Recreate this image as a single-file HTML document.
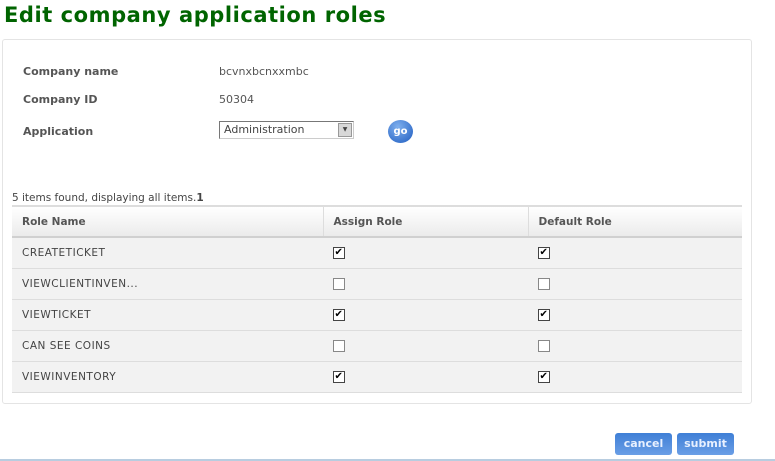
<html><head><style>
body{margin:0;width:775px;height:461px;background:#fff;font-family:"DejaVu Sans",Verdana,sans-serif;position:relative;overflow:hidden}
h1{position:absolute;left:4px;top:3px;margin:0;font:bold 21px "DejaVu Sans",Verdana,sans-serif;color:#006400;letter-spacing:0.55px}
.box{position:absolute;left:2px;top:39px;width:748px;height:363px;border:1px solid #e4e4e4;border-radius:3px}
.l{position:absolute;left:23px;font-size:11px;font-weight:bold;color:#555}
.v{position:absolute;left:219px;font-size:11px;color:#555}
.sel{position:absolute;left:219px;top:121px;width:135px;height:18px;border:1px solid #777;border-right-color:#ccc;border-bottom-color:#ccc;box-sizing:border-box;font-size:11px;color:#444;padding-left:4px;line-height:16px;background:#fff}
.sel span{position:absolute;right:1px;top:1px;width:14px;height:14px;background:#d8d8d8;border:1px solid #999;box-sizing:border-box;font-size:6px;text-align:center;line-height:12px}
.go{position:absolute;left:388px;top:120px;width:25px;height:23px;border-radius:50%;background:radial-gradient(circle at 40% 30%,#7fb0ee,#1e5cc0);color:#fff;font-size:10px;font-weight:bold;text-align:center;line-height:23px}
.cnt{position:absolute;left:12px;top:192px;font-size:10.5px;color:#444}
table{position:absolute;left:12px;top:205px;width:730px;border-collapse:collapse;font-size:10.5px;color:#444}
th{height:31px;text-align:left;padding-left:10px;font-weight:bold;background:linear-gradient(#fff,#ebebeb);border-top:2px solid #ddd;border-bottom:2px solid #d0d0d0;border-left:1px solid #ddd;color:#555;box-sizing:border-box}
th:first-child{border-left:none}
td{height:31px;padding-left:10px;background:#f2f2f2;border-bottom:1px solid #ddd;box-sizing:border-box;letter-spacing:0.5px}
.cb{display:inline-block;width:12px;height:12px;border:1px solid #444;background:#fff;box-sizing:border-box;font-size:10px;line-height:10px;text-align:center;color:#000;font-weight:900;vertical-align:middle}
.cb.n{border-color:#888}
.btn{position:absolute;top:433px;height:22px;width:57px;border-radius:3px;background:linear-gradient(#3f7fd6,#6a9ee6);color:#e8f0ff;font-size:11px;font-weight:bold;text-align:center;line-height:22px}
.bl{position:absolute;left:0;top:459px;width:775px;height:2px;background:#b8cde0}
</style></head><body>
<h1>Edit company application roles</h1>
<div class="box"></div>
<div class="l" style="top:65px">Company name</div><div class="v" style="top:65px">bcvnxbcnxxmbc</div>
<div class="l" style="top:93px">Company ID</div><div class="v" style="top:93px">50304</div>
<div class="l" style="top:125px">Application</div>
<div class="sel">Administration<span>▼</span></div>
<div class="go">go</div>
<div class="cnt">5 items found, displaying all items.<b>1</b></div>
<table>
<tr><th style="width:311px">Role Name</th><th style="width:205px">Assign Role</th><th>Default Role</th></tr>
<tr><td>CREATETICKET</td><td><span class="cb">✔</span></td><td><span class="cb">✔</span></td></tr>
<tr><td>VIEWCLIENTINVEN...</td><td><span class="cb n"></span></td><td><span class="cb n"></span></td></tr>
<tr><td>VIEWTICKET</td><td><span class="cb">✔</span></td><td><span class="cb">✔</span></td></tr>
<tr><td>CAN SEE COINS</td><td><span class="cb n"></span></td><td><span class="cb n"></span></td></tr>
<tr><td>VIEWINVENTORY</td><td><span class="cb">✔</span></td><td><span class="cb">✔</span></td></tr>
</table>
<div class="btn" style="left:615px">cancel</div>
<div class="btn" style="left:677px">submit</div>
<div class="bl"></div>
</body></html>
